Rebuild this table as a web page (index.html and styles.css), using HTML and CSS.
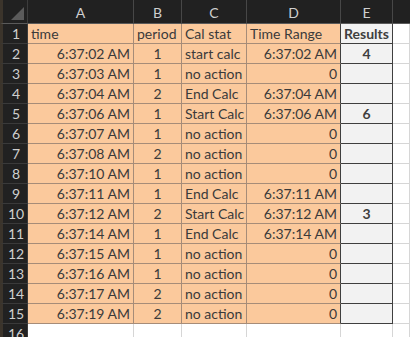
FILE: index.html
```html
<!DOCTYPE html>
<html>
<head>
<meta charset="utf-8">
<link rel="stylesheet" href="styles.css">
</head>
<body>
<div class="sheet">
  <div class="hd corner"><span class="tri"></span></div>
  <div class="hd col">A</div>
  <div class="hd col">B</div>
  <div class="hd col">C</div>
  <div class="hd col">D</div>
  <div class="hd col">E</div>
  <div class="hd col last"></div>

  <div class="hd row">1</div>
  <div class="c p l">time</div>
  <div class="c p l">period</div>
  <div class="c p l">Cal stat</div>
  <div class="c p l dr">Time Range</div>
  <div class="c o">Results</div>
  <div class="c w"></div>

  <div class="hd row">2</div>
  <div class="c p r">6:37:02 AM</div>
  <div class="c p m">1</div>
  <div class="c p l">start calc</div>
  <div class="c p r dr">6:37:02 AM</div>
  <div class="c o">4</div>
  <div class="c w"></div>

  <div class="hd row">3</div>
  <div class="c p r">6:37:03 AM</div>
  <div class="c p m">1</div>
  <div class="c p l">no action</div>
  <div class="c p r dr">0</div>
  <div class="c o"></div>
  <div class="c w"></div>

  <div class="hd row">4</div>
  <div class="c p r">6:37:04 AM</div>
  <div class="c p m">2</div>
  <div class="c p l">End Calc</div>
  <div class="c p r dr">6:37:04 AM</div>
  <div class="c o"></div>
  <div class="c w"></div>

  <div class="hd row">5</div>
  <div class="c p r">6:37:06 AM</div>
  <div class="c p m">1</div>
  <div class="c p l">Start Calc</div>
  <div class="c p r dr">6:37:06 AM</div>
  <div class="c o">6</div>
  <div class="c w"></div>

  <div class="hd row">6</div>
  <div class="c p r">6:37:07 AM</div>
  <div class="c p m">1</div>
  <div class="c p l">no action</div>
  <div class="c p r dr">0</div>
  <div class="c o"></div>
  <div class="c w"></div>

  <div class="hd row">7</div>
  <div class="c p r">6:37:08 AM</div>
  <div class="c p m">2</div>
  <div class="c p l">no action</div>
  <div class="c p r dr">0</div>
  <div class="c o"></div>
  <div class="c w"></div>

  <div class="hd row">8</div>
  <div class="c p r">6:37:10 AM</div>
  <div class="c p m">1</div>
  <div class="c p l">no action</div>
  <div class="c p r dr">0</div>
  <div class="c o"></div>
  <div class="c w"></div>

  <div class="hd row">9</div>
  <div class="c p r">6:37:11 AM</div>
  <div class="c p m">1</div>
  <div class="c p l">End Calc</div>
  <div class="c p r dr">6:37:11 AM</div>
  <div class="c o"></div>
  <div class="c w"></div>

  <div class="hd row">10</div>
  <div class="c p r">6:37:12 AM</div>
  <div class="c p m">2</div>
  <div class="c p l">Start Calc</div>
  <div class="c p r dr">6:37:12 AM</div>
  <div class="c o">3</div>
  <div class="c w"></div>

  <div class="hd row">11</div>
  <div class="c p r">6:37:14 AM</div>
  <div class="c p m">1</div>
  <div class="c p l">End Calc</div>
  <div class="c p r dr">6:37:14 AM</div>
  <div class="c o"></div>
  <div class="c w"></div>

  <div class="hd row">12</div>
  <div class="c p r">6:37:15 AM</div>
  <div class="c p m">1</div>
  <div class="c p l">no action</div>
  <div class="c p r dr">0</div>
  <div class="c o"></div>
  <div class="c w"></div>

  <div class="hd row">13</div>
  <div class="c p r">6:37:16 AM</div>
  <div class="c p m">1</div>
  <div class="c p l">no action</div>
  <div class="c p r dr">0</div>
  <div class="c o"></div>
  <div class="c w"></div>

  <div class="hd row">14</div>
  <div class="c p r">6:37:17 AM</div>
  <div class="c p m">2</div>
  <div class="c p l">no action</div>
  <div class="c p r dr">0</div>
  <div class="c o"></div>
  <div class="c w"></div>

  <div class="hd row">15</div>
  <div class="c p r">6:37:19 AM</div>
  <div class="c p m">2</div>
  <div class="c p l">no action</div>
  <div class="c p r dr">0</div>
  <div class="c o"></div>
  <div class="c w"></div>

  <div class="hd row">16</div>
  <div class="c w"></div>
  <div class="c w"></div>
  <div class="c w"></div>
  <div class="c w"></div>
  <div class="c w"></div>
  <div class="c w"></div>
</div>
</body>
</html>
```

FILE: styles.css
```css
html, body {
  margin: 0;
  padding: 0;
  background: #ffffff;
  overflow: hidden;
}

.sheet {
  display: grid;
  grid-template-columns: 28px 106px 48px 65px 94px 52px 1fr;
  grid-template-rows: 24px repeat(16, 20px);
  width: 410px;
  height: 337px;
  overflow: hidden;
  font-family: "Lato", "Liberation Sans", sans-serif;
  font-size: 14px;
  color: #3a3a3a;
}

.hd {
  background: #212121;
  color: #cfcfcf;
  display: flex;
  align-items: center;
  justify-content: center;
  box-sizing: border-box;
  font-size: 14px;
}

.corner {
  position: relative;
  border-right: 1px solid #3c3c3c;
  border-bottom: 1px solid #5a5a5a;
  border-left: 3px solid #3b342b;
}

.tri {
  position: absolute;
  right: 3px;
  bottom: 3px;
  width: 0;
  height: 0;
  border-left: 13px solid transparent;
  border-bottom: 13px solid #5b5b5b;
}

.col {
  border-right: 1px solid #474747;
  border-bottom: 1px solid #5a5a5a;
  padding-top: 2px;
}

.col.last {
  border-right: none;
}

.row {
  border-bottom: 1px solid #3a3a3a;
  border-right: 1px solid #3c3c3c;
  border-left: 3px solid #3b342b;
  padding-left: 2px;
}

.c {
  box-sizing: border-box;
  display: flex;
  align-items: center;
  white-space: nowrap;
  overflow: hidden;
  border-right: 1px solid #d6d6d6;
  border-bottom: 1px solid #d6d6d6;
}

.p {
  background: #fbc99c;
  border-right-color: #a68c78;
  border-bottom-color: #a68c78;
}

.p.dr {
  border-right-color: #3f3f3f;
}

.l {
  justify-content: flex-start;
  padding-left: 3px;
}

.r {
  justify-content: flex-end;
  padding-right: 3px;
}

.m {
  justify-content: center;
}

.o {
  background: #f2f2f2;
  border-right-color: #3f3f3f;
  border-bottom-color: #3f3f3f;
  justify-content: center;
  font-weight: bold;
  color: #3f3f3f;
}

.w {
  background: #ffffff;
}
```
